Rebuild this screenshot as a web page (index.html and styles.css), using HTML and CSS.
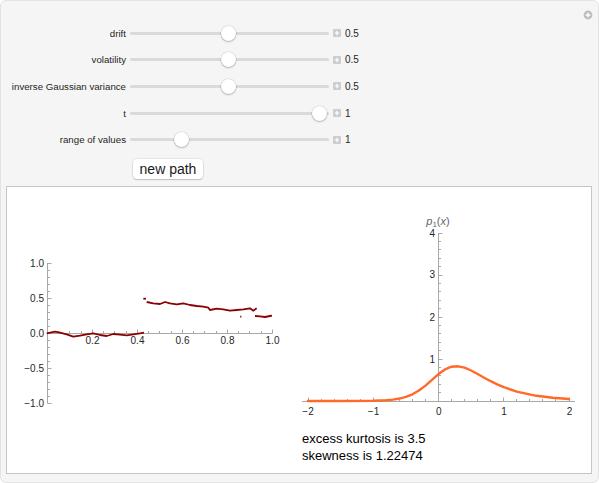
FILE: index.html
```html
<!DOCTYPE html>
<html>
<head>
<meta charset="utf-8">
<link rel="stylesheet" href="styles.css">
</head>
<body>
<div class="panel">
  <svg class="corner-icon" width="10" height="10" viewBox="0 0 10 10"><circle cx="5" cy="5" r="4.4" fill="#bcbcbc"/><path d="M5 2.6v4.8M2.6 5h4.8" stroke="#fff" stroke-width="1.3"/></svg>
  <div class="controls">
    <div class="row"><span class="label">drift</span><div class="track"><span class="thumb" style="--v:0.5"></span></div><svg class="plus" width="8" height="8" viewBox="0 0 8 8"><rect width="8" height="8" rx="1" fill="#cdcdcd"/><path d="M4 1.8v4.4M1.8 4h4.4" stroke="#fff" stroke-width="1.2"/></svg><span class="val">0.5</span></div>
    <div class="row"><span class="label">volatility</span><div class="track"><span class="thumb" style="--v:0.5"></span></div><svg class="plus" width="8" height="8" viewBox="0 0 8 8"><rect width="8" height="8" rx="1" fill="#cdcdcd"/><path d="M4 1.8v4.4M1.8 4h4.4" stroke="#fff" stroke-width="1.2"/></svg><span class="val">0.5</span></div>
    <div class="row"><span class="label">inverse Gaussian variance</span><div class="track"><span class="thumb" style="--v:0.5"></span></div><svg class="plus" width="8" height="8" viewBox="0 0 8 8"><rect width="8" height="8" rx="1" fill="#cdcdcd"/><path d="M4 1.8v4.4M1.8 4h4.4" stroke="#fff" stroke-width="1.2"/></svg><span class="val">0.5</span></div>
    <div class="row"><span class="label">t</span><div class="track"><span class="thumb" style="--v:1"></span></div><svg class="plus" width="8" height="8" viewBox="0 0 8 8"><rect width="8" height="8" rx="1" fill="#cdcdcd"/><path d="M4 1.8v4.4M1.8 4h4.4" stroke="#fff" stroke-width="1.2"/></svg><span class="val">1</span></div>
    <div class="row"><span class="label">range of values</span><div class="track"><span class="thumb" style="--v:0.24"></span></div><svg class="plus" width="8" height="8" viewBox="0 0 8 8"><rect width="8" height="8" rx="1" fill="#cdcdcd"/><path d="M4 1.8v4.4M1.8 4h4.4" stroke="#fff" stroke-width="1.2"/></svg><span class="val">1</span></div>
  </div>
  <div class="btn-row"><button class="btn">new path</button></div>
  <div class="output">
    <svg class="plot-left" width="293" height="240" viewBox="7 187 293 240">
      <g class="axis">
        <path d="M47.5 263V403.5M47 333.5H272.5"/>
        <path d="M47.5 263.5h4M47.5 298.5h4M47.5 333.5h4M47.5 368.5h4M47.5 403.5h4"/>
        <path d="M47.5 270.5h2.5M47.5 277.5h2.5M47.5 284.5h2.5M47.5 291.5h2.5M47.5 305.5h2.5M47.5 312.5h2.5M47.5 319.5h2.5M47.5 326.5h2.5M47.5 340.5h2.5M47.5 347.5h2.5M47.5 354.5h2.5M47.5 361.5h2.5M47.5 375.5h2.5M47.5 382.5h2.5M47.5 389.5h2.5M47.5 396.5h2.5"/>
        <path d="M92.5 333.5v-4M137.5 333.5v-4M182.5 333.5v-4M227.5 333.5v-4M272.5 333.5v-4"/>
        <path d="M58.5 333.5v-2.5M69.5 333.5v-2.5M81.5 333.5v-2.5M103.5 333.5v-2.5M114.5 333.5v-2.5M126.5 333.5v-2.5M148.5 333.5v-2.5M159.5 333.5v-2.5M171.5 333.5v-2.5M193.5 333.5v-2.5M204.5 333.5v-2.5M216.5 333.5v-2.5M238.5 333.5v-2.5M249.5 333.5v-2.5M261.5 333.5v-2.5"/>
      </g>
      <g class="ticklabels" text-anchor="end">
        <text x="44" y="266.6">1.0</text>
        <text x="44" y="301.6">0.5</text>
        <text x="44" y="336.6">0.0</text>
        <text x="44" y="371.6">−0.5</text>
        <text x="44" y="406.6">−1.0</text>
      </g>
      <g class="ticklabels" text-anchor="middle">
        <text x="92.5" y="344">0.2</text>
        <text x="137.5" y="344">0.4</text>
        <text x="182.5" y="344">0.6</text>
        <text x="227.5" y="344">0.8</text>
        <text x="272.5" y="344">1.0</text>
      </g>
      <g class="path">
        <polyline points="46.7,333.3 55,331.7 60,332.7 66.7,334.3 73.3,336.7 80,335.7 86.7,334.3 93.3,333.3 100,335 106.7,336 113.3,334 120,334.7 126.7,335.3 133.3,334.3 140,333.3 144,332.7"/>
        <polyline points="143.3,298.7 146,298.7"/>
        <polyline points="146.7,302 153.3,303.3 160,304 165,302 170,303.3 176.7,304.3 183.3,303.3 190,305 196.7,306 203.3,306.7 208.3,307.7 210,310 216.7,308.7 223.3,309.3 230,310.7 236.7,310 243.3,309.3 250,308.3 253.3,310.7 256.7,308.3"/>
        <polyline points="240.2,316.7 241.4,316.7"/>
        <polyline points="255,316 260,316.3 265,317 270,316 272,315.7"/>
      </g>
    </svg>
    <div class="right-col">
      <svg class="plot-right" width="291" height="240" viewBox="300 187 291 240">
        <g class="axis">
          <path d="M438.5 233V401.5M302 401.5H575"/>
          <path d="M438.5 359.5h4M438.5 317.5h4M438.5 275.5h4M438.5 233.5h4"/>
          <path d="M438.5 392.5h2.5M438.5 384.5h2.5M438.5 375.5h2.5M438.5 367.5h2.5M438.5 350.5h2.5M438.5 342.5h2.5M438.5 333.5h2.5M438.5 325.5h2.5M438.5 308.5h2.5M438.5 300.5h2.5M438.5 291.5h2.5M438.5 283.5h2.5M438.5 266.5h2.5M438.5 258.5h2.5M438.5 249.5h2.5M438.5 241.5h2.5"/>
          <path d="M308.5 401.5v-4M373.5 401.5v-4M503.5 401.5v-4M569.5 401.5v-4"/>
          <path d="M321.5 401.5v-2.5M334.5 401.5v-2.5M347.5 401.5v-2.5M360.5 401.5v-2.5M386.5 401.5v-2.5M399.5 401.5v-2.5M412.5 401.5v-2.5M425.5 401.5v-2.5M451.5 401.5v-2.5M464.5 401.5v-2.5M477.5 401.5v-2.5M490.5 401.5v-2.5M516.5 401.5v-2.5M529.5 401.5v-2.5M542.5 401.5v-2.5M555.5 401.5v-2.5"/>
        </g>
        <g class="ticklabels" text-anchor="end">
          <text x="435" y="363.3">1</text>
          <text x="435" y="321">2</text>
          <text x="435" y="278.3">3</text>
          <text x="435" y="236.7">4</text>
        </g>
        <g class="ticklabels" text-anchor="middle">
          <text x="308" y="415">−2</text>
          <text x="373.5" y="415">−1</text>
          <text x="438.7" y="415">0</text>
          <text x="504" y="415">1</text>
          <text x="569.5" y="415">2</text>
        </g>
        <text class="axis-label" x="438" y="225" text-anchor="middle"><tspan class="it">p</tspan><tspan class="sub" dy="2">1</tspan><tspan dy="-2">(</tspan><tspan class="it">x</tspan>)</text>
        <polyline class="curve" points="308,401 340.6,401 373.25,400.75 386.3,400.2 392.8,399.6 399.35,398.55 405.9,396.9 412.4,394.3 418.9,390.5 425.45,385.6 432,379.85 438.5,374.1 445,369.45 451.55,366.7 458.1,366.3 464.6,367.7 471.1,370.5 477.65,374 484.2,377.7 490.7,381.2 497.2,384.4 503.75,387.2 516.8,391.6 536.4,395.8 552.7,397.8 569,399.05"/>
      </svg>
      <div class="stats">
        <div>excess kurtosis is 3.5</div>
        <div>skewness is 1.22474</div>
      </div>
    </div>
  </div>
</div>
</body>
</html>
```
FILE: styles.css
```css
* { box-sizing: border-box; }
html, body { margin: 0; padding: 0; background: #ffffff; }
body { width: 599px; height: 483px; overflow: hidden; font-family: "Liberation Sans", Arial, sans-serif; }

.panel {
  position: relative;
  width: 599px;
  height: 483px;
  background: #f5f5f5;
  border: 1px solid #e3e3e3;
  border-radius: 6px;
}

.corner-icon {
  position: absolute;
  left: 582px;
  top: 9px;
}

.controls {
  padding-top: 19px;
}

.row {
  display: flex;
  align-items: center;
  height: 26.6px;
}

.label {
  width: 125px;
  text-align: right;
  font-size: 9.7px;
  color: #262626;
}

.track {
  position: relative;
  width: 199px;
  height: 16px;
  margin-left: 4px;
}
.track::before {
  content: "";
  position: absolute;
  left: 0;
  right: 0;
  top: 6.5px;
  height: 3px;
  border-radius: 2px;
  background: #dadada;
}
.thumb {
  position: absolute;
  top: 0.5px;
  left: calc(8px + var(--v) * 181px - 7.5px);
  width: 15px;
  height: 15px;
  border-radius: 50%;
  background: #ffffff;
  box-shadow: 0 0 0 0.5px rgba(0,0,0,0.12), 0 1px 2px rgba(0,0,0,0.22);
}

.plus {
  margin-left: 4px;
  display: block;
}

.val {
  margin-left: 4px;
  font-size: 10px;
  color: #262626;
}

.btn-row {
  margin-top: 6px;
  padding-left: 132px;
  height: 20px;
}
.btn {
  display: block;
  width: 70px;
  height: 20px;
  padding: 0;
  border: none;
  border-radius: 4px;
  background: #ffffff;
  box-shadow: 0 0 0 0.5px rgba(0,0,0,0.12), 0 1px 1.5px rgba(0,0,0,0.18);
  font-family: "Liberation Sans", Arial, sans-serif;
  font-size: 14px;
  color: #1a1a1a;
}

.output {
  margin-top: 7px;
  margin-left: 5px;
  width: 586px;
  height: 288px;
  background: #ffffff;
  border: 1px solid #c6c6c6;
  display: flex;
}

.plot-left, .plot-right { display: block; }

.right-col {
  width: 291px;
  display: flex;
  flex-direction: column;
}

.axis path {
  fill: none;
  stroke: #a8a8a8;
  stroke-width: 1;
}

.ticklabels text {
  font-family: "Liberation Sans", Arial, sans-serif;
  font-size: 10px;
  fill: #262626;
}

.axis-label {
  font-family: "Liberation Sans", Arial, sans-serif;
  font-size: 11px;
  fill: #666666;
}
.axis-label .it { font-style: italic; }
.axis-label .sub { font-size: 8px; }

.path polyline {
  fill: none;
  stroke: #8b0000;
  stroke-width: 1.8;
  stroke-linejoin: round;
}

.curve {
  fill: none;
  stroke: #ff6a2a;
  stroke-width: 2.4;
  stroke-linejoin: round;
  stroke-linecap: round;
}

.stats {
  margin-top: 3px;
  padding-left: 2px;
  font-size: 13px;
  line-height: 17px;
  color: #000000;
}
```
